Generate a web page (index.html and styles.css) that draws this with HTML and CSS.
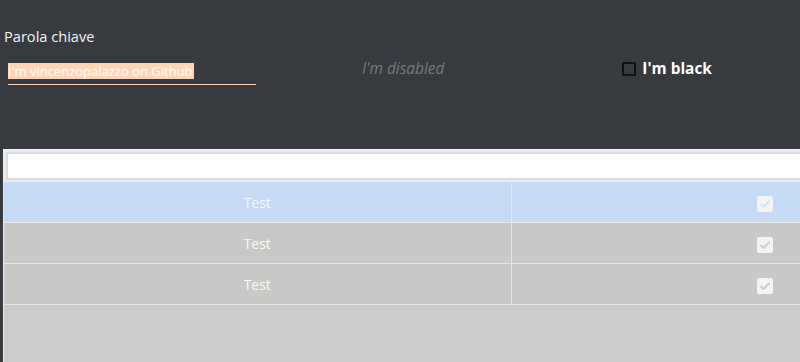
FILE: index.html
```html
<!DOCTYPE html>
<html lang="en">
<head>
    <meta charset="UTF-8">
    <meta name="viewport" content="width=device-width, initial-scale=1.0">
    <title>Parola chiave</title>
    <link rel="stylesheet" href="styles.css">
</head>
<body>
    <div class="form">
        <div class="label">Parola chiave</div>
        <div class="fields">
            <div class="text-field">
                <span class="selected">I'm vincenzopalazzo on Github</span>
            </div>
            <div class="disabled-field">I'm disabled</div>
            <label class="check-field">
                <span class="box"></span>
                <span class="check-label">I'm black</span>
            </label>
        </div>
    </div>

    <div class="panel">
        <div class="search"></div>
        <div class="table-area">
            <table class="grid">
                <tr class="selected-row">
                    <td>Test</td>
                    <td><span class="tick"><svg width="12" height="10" viewBox="0 0 12 10"><path d="M1.5 5.2 L4.5 8 L10.5 1.8" fill="none" stroke-width="1.8"/></svg></span></td>
                </tr>
                <tr>
                    <td>Test</td>
                    <td><span class="tick"><svg width="12" height="10" viewBox="0 0 12 10"><path d="M1.5 5.2 L4.5 8 L10.5 1.8" fill="none" stroke-width="1.8"/></svg></span></td>
                </tr>
                <tr>
                    <td>Test</td>
                    <td><span class="tick"><svg width="12" height="10" viewBox="0 0 12 10"><path d="M1.5 5.2 L4.5 8 L10.5 1.8" fill="none" stroke-width="1.8"/></svg></span></td>
                </tr>
            </table>
        </div>
    </div>
</body>
</html>
```

FILE: styles.css
```css
html, body {
    margin: 0;
    height: 100%;
    overflow: hidden;
}
body {
    background-color: #373a3e;
    font-family: "Open Sans", "Noto Sans", sans-serif;
    font-size: 14px;
    color: #f4f4f4;
}
.form {
    padding-top: 26px;
    height: 149px;
    box-sizing: border-box;
}
.label {
    padding-left: 4px;
    line-height: 20px;
    font-size: 14.6px;
}
.fields {
    display: flex;
    align-items: flex-start;
    margin-top: 15px;
}
.text-field {
    margin-left: 8px;
    width: 248px;
    height: 23px;
    border-bottom: 1px solid #ffd0b0;
}
.selected {
    display: inline-block;
    background-color: #ffd5b8;
    color: #fff;
    font-size: 13px;
    line-height: 16px;
    padding-right: 1px;
}
.disabled-field {
    margin-left: 106px;
    font-style: italic;
    font-size: 15.4px;
    color: #777a7c;
    line-height: 16px;
}
.check-field {
    display: flex;
    align-items: center;
    margin-left: 178px;
    margin-top: -1px;
    gap: 6px;
}
.box {
    width: 10px;
    height: 10px;
    border: 2px solid #111;
    border-radius: 1px;
}
.check-label {
    font-weight: bold;
    font-size: 15.4px;
    color: #fff;
    line-height: 18px;
}
.panel {
    height: calc(100% - 149px);
    margin-left: 3px;
    background-color: #ececec;
    border-top: 1px solid #f6f6f6;
    padding: 2px 0 0 3px;
    box-sizing: border-box;
}
.search {
    height: 28px;
    border: 2px solid #dcdcdc;
    border-right: none;
    background-color: #fff;
    box-sizing: border-box;
}
.table-area {
    margin-top: 2px;
    margin-left: -2px;
    height: calc(100% - 30px);
    background-color: #cbcbcb;
}
.grid {
    border-collapse: collapse;
    width: 1014px;
}
.grid td {
    width: 50%;
    height: 40px;
    padding: 0;
    text-align: center;
    background-color: #c8c9c7;
    border-bottom: 1px solid #e6e6e6;
    border-left: 1px solid #e6e6e6;
    color: #f8f8f8;
}
.grid td:first-child {
    border-left: none;
}
.grid .selected-row td {
    background-color: #c4daf5;
}
.tick {
    display: inline-flex;
    justify-content: center;
    align-items: center;
    width: 16px;
    height: 16px;
    border-radius: 2px;
    background-color: #f4f4f4;
    vertical-align: middle;
}
.tick path {
    stroke: #cacaca;
}
.selected-row .tick path {
    stroke: #cfe0f6;
}
```
